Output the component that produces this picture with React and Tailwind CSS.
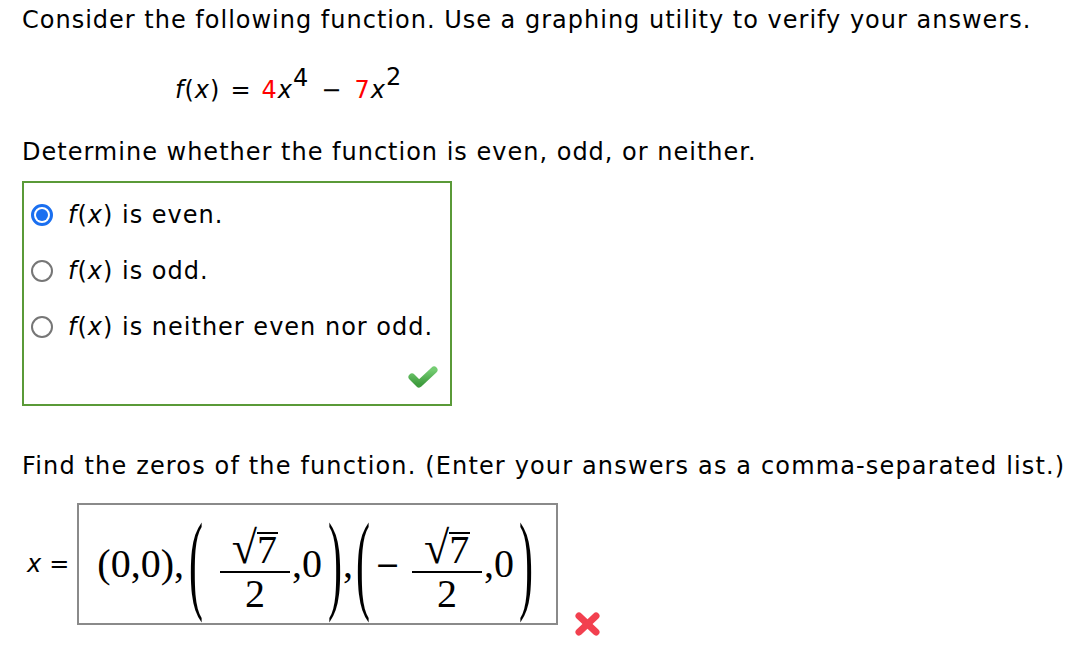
import React from "react";

const sans = { fontFamily: '"DejaVu Sans", Verdana, sans-serif' };
const serif = { fontFamily: '"Liberation Serif", "Times New Roman", serif' };

function Radio({ checked }) {
  if (checked) {
    return (
      <span className="flex h-[22px] w-[22px] shrink-0 items-center justify-center rounded-full border-[3px] border-[#1a6ff0] bg-white">
        <span className="h-[12px] w-[12px] rounded-full bg-[#1a6ff0]" />
      </span>
    );
  }
  return <span className="h-[22px] w-[22px] shrink-0 rounded-full border-[2px] border-[#767676] bg-white" />;
}

function Fx() {
  return (
    <span>
      <i>f</i>(<i>x</i>)
    </span>
  );
}

function BigParen({ children }) {
  return (
    <span className="inline-block w-[16px] origin-center scale-y-[2.6] text-center text-[42px] leading-none">
      {children}
    </span>
  );
}

function Frac() {
  return (
    <span className="inline-flex w-[70px] flex-col items-center leading-none">
      <span className="flex items-start pb-[5px]">
        <span className="text-[46px] leading-[36px]">√</span>
        <span className="mt-[2px] border-t-[2px] border-black pr-[1px] text-[40px] leading-[32px]">7</span>
      </span>
      <span className="h-[2px] w-[70px] bg-black" />
      <span className="pt-[6px] text-[40px] leading-[30px]">2</span>
    </span>
  );
}

function Check() {
  return (
    <svg width="30" height="22" viewBox="0 0 30 22">
      <defs>
        <linearGradient id="g" x1="0" y1="0" x2="0" y2="1">
          <stop offset="0" stopColor="#74cc72" />
          <stop offset="1" stopColor="#3f9c3e" />
        </linearGradient>
      </defs>
      <polyline points="4,11 11,18 26,4" fill="none" stroke="url(#g)" strokeWidth="7" strokeLinecap="round" strokeLinejoin="round" />
    </svg>
  );
}

function Cross() {
  return (
    <svg width="28" height="26" viewBox="0 0 28 26">
      <g stroke="#f2404f" strokeWidth="7" strokeLinecap="round">
        <line x1="5" y1="5" x2="22" y2="21" />
        <line x1="22" y1="5" x2="5" y2="21" />
      </g>
    </svg>
  );
}

export default function App() {
  return (
    <div className="min-h-screen bg-white pl-[22px] pt-[6px] text-[24px] tracking-[1px] text-black" style={sans}>
      <p className="leading-[29px]">Consider the following function. Use a graphing utility to verify your answers.</p>

      <p className="ml-[153px] mt-[41px] flex items-baseline leading-[29px]">
        <Fx />
        <span className="mx-[10px]">=</span>
        <span className="text-[#ff0000]">4</span>
        <i>x</i>
        <span className="relative -top-[12px]">4</span>
        <span className="mx-[12px]">−</span>
        <span className="text-[#ff0000]">7</span>
        <i>x</i>
        <span className="relative -top-[13px]">2</span>
      </p>

      <p className="mt-[33px] leading-[29px]">Determine whether the function is even, odd, or neither.</p>

      <div className="mt-[14px] flex h-[225px] w-[430px] flex-col border-[2px] border-[#5a9a38] pl-[7px] pt-[18px]">
        <label className="flex h-[28px] items-center gap-[15px]">
          <Radio checked />
          <span>
            <Fx /> is even.
          </span>
        </label>
        <label className="mt-[28px] flex h-[28px] items-center gap-[15px]">
          <Radio />
          <span>
            <Fx /> is odd.
          </span>
        </label>
        <label className="mt-[28px] flex h-[28px] items-center gap-[15px]">
          <Radio />
          <span>
            <Fx /> is neither even nor odd.
          </span>
        </label>
        <div className="mt-auto flex justify-end pb-[16px] pr-[12px]">
          <Check />
        </div>
      </div>

      <p className="mt-[46px] leading-[29px] tracking-[1.15px]">
        Find the zeros of the function. (Enter your answers as a comma-separated list.)
      </p>

      <div className="mt-[22px] flex items-start">
        <div className="flex h-[122px] items-center pl-[5px] pr-[8px] tracking-normal">
          <i>x</i>
          <span className="ml-[8px]">=</span>
        </div>
        <div
          className="flex h-[122px] w-[481px] items-center border-[2px] border-[#8a8a8a] pl-[18px] text-[40px] tracking-normal"
          style={serif}
        >
          <span>(0,0),</span>
          <span className="ml-[4px]">
            <BigParen>(</BigParen>
          </span>
          <span className="ml-[16px]">
            <Frac />
          </span>
          <span className="ml-[2px]">,0</span>
          <span className="ml-[5px]">
            <BigParen>)</BigParen>
          </span>
          <span>,</span>
          <span className="ml-[2px]">
            <BigParen>(</BigParen>
          </span>
          <span className="ml-[4px] text-[30px]" style={{ fontFamily: '"DejaVu Serif", serif' }}>
            −
          </span>
          <span className="ml-[12px]">
            <Frac />
          </span>
          <span className="ml-[2px]">,0</span>
          <span className="ml-[4px]">
            <BigParen>)</BigParen>
          </span>
        </div>
        <div className="ml-[16px] mt-[108px]">
          <Cross />
        </div>
      </div>
    </div>
  );
}
